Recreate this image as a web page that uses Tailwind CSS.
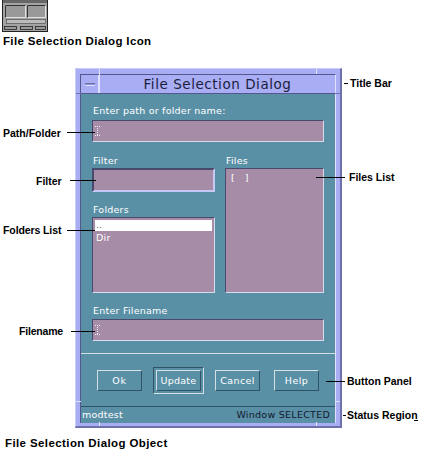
<!DOCTYPE html>
<html lang="en">
<head>
<meta charset="utf-8" />
<title>File Selection Dialog</title>
<script src="https://cdn.jsdelivr.net/npm/@tailwindcss/browser@4"></script>
</head>
<body class="bg-white">
<div class="relative w-[430px] h-[458px] overflow-hidden bg-white font-['Liberation_Sans',sans-serif] text-black">

  <!-- icon + caption -->
  <div class="h-[68px] pl-[2px]">
    <svg width="46" height="32" viewBox="0 0 46 32" class="block">
      <rect x="0" y="0" width="46" height="32" fill="#a3a3a3" />
      <rect x="0" y="0" width="46" height="3" fill="#666" />
      <rect x="0.5" y="-1" width="45" height="32.5" fill="none" stroke="#222" />
      <rect x="3.5" y="5.5" width="20" height="12" fill="#999" stroke="#e2e2e2" />
      <rect x="25.5" y="5.5" width="18" height="12" fill="#999" stroke="#e2e2e2" />
      <path d="M3.5 5.5H23.5M25.5 5.5H43.5M3.5 5.5V17.5M25.5 5.5V17.5" stroke="#333" fill="none" />
      <rect x="4.5" y="19.5" width="39" height="4" fill="#bbb" stroke="#444" stroke-width="0.6" />
      <rect x="2.5" y="26.5" width="12" height="3" fill="#999" stroke="#222" stroke-width="0.8" />
      <rect x="18.5" y="26.5" width="12" height="3" fill="#999" stroke="#222" stroke-width="0.8" />
      <rect x="33.5" y="26.5" width="10" height="3" fill="#999" stroke="#222" stroke-width="0.8" />
    </svg>
    <p class="mt-[1px] ml-[1px] text-[11.5px] leading-[16px] font-bold tracking-[0.35px]">File Selection Dialog Icon</p>
  </div>

  <!-- dialog -->
  <div class="ml-[75px] w-[267px] h-[360px] relative bg-[#a9adf3] border-r-2 border-b-2 border-[#6d70ab] border-t border-l border-t-[#c9ccfa] border-l-[#c9ccfa] pt-[5px] pl-[4px] pr-[4px] pb-[3px] font-['DejaVu_Sans',sans-serif]">
    <!-- frame corner notches -->
    <div class="absolute left-[23px] top-0 w-[1px] h-[24px] bg-[#dfe1fd]"></div>
    <div class="absolute right-[23px] top-0 w-[1px] h-[5px] bg-[#dfe1fd]"></div>
    <div class="absolute left-[23px] bottom-0 w-[1px] h-[4px] bg-[#dfe1fd]"></div>
    <div class="absolute right-[23px] bottom-0 w-[1px] h-[4px] bg-[#dfe1fd]"></div>
    <div class="absolute left-0 top-[24px] w-[5px] h-[1px] bg-[#6d70ab]"></div>
    <div class="absolute right-0 top-[24px] w-[5px] h-[1px] bg-[#6d70ab]"></div>
    <div class="absolute left-0 bottom-[24px] w-[5px] h-[1px] bg-[#dfe1fd]"></div>
    <div class="absolute right-0 bottom-[24px] w-[5px] h-[1px] bg-[#dfe1fd]"></div>

    <div class="h-full flex flex-col border-t border-l border-[#53568f] border-r border-r-[#dfe1fd]">
      <!-- title bar -->
      <div class="h-[19px] flex shrink-0 border-b border-[#53568f] bg-[#a9adf3]">
        <div class="w-[18px] flex items-center justify-center border-r border-[#dfe1fd]">
          <span class="block w-[10px] h-[3px] bg-[#8e92d6] border-t border-t-[#6d70ab] border-b border-b-[#dfe1fd]"></span>
        </div>
        <div class="flex-1 text-center text-[13.5px] leading-[19px] tracking-[0.55px] text-[#1c1d3c] pl-[1px]">File Selection Dialog</div>
      </div>

      <!-- body -->
      <div class="flex-1 flex flex-col bg-[#5a90a6] text-[9.5px] leading-[12px] text-white tracking-[0.23px]">
        <div class="h-[259px] shrink-0 pl-[11px] pr-[11px] pt-[11px]">
          <p class="h-[15px] pl-[1px]">Enter path or folder name:</p>
          <div class="h-[22px] w-[232px] bg-[#a68ca6] border border-[#4a4a6e] border-r-[#d6dcec] border-b-[#d6dcec] pl-[2px] pt-[5px]">
            <svg width="5" height="10" viewBox="0 0 5 10" fill="#f2eef6" class="block"><path d="M0 0h1v1H0zM2 0h1v1H2zM4 0h1v1H4zM2 2h1v1H2zM2 4h1v1H2zM2 6h1v1H2zM0 9h1v1H0zM2 8h1v1H2zM4 9h1v1H4zM2 9h1v1H2z" /></svg>
          </div>

          <div class="mt-[13px] flex gap-[10px]">
            <div class="w-[123px]">
              <p class="h-[13px] pl-[1px]">Filter</p>
              <div class="h-[24px] bg-[#a68ca6] border-2 border-[#c6c8f5] border-t-[#4a4a6e] border-l-[#4a4a6e]"></div>
              <p class="mt-[12px] h-[13px] pl-[1px]">Folders</p>
              <div class="h-[76px] bg-[#a68ca6] border border-[#4a4a6e] border-r-[#d6dcec] border-b-[#d6dcec] p-[2px] pb-0">
                <div class="h-[11px] bg-white text-[#5a5a70] pl-[1px] text-[9px] leading-[11px]">..</div>
                <div class="mt-[1px] pl-[1px]">Dir</div>
              </div>
            </div>
            <div class="w-[99px]">
              <p class="h-[13px] pl-[1px]">Files</p>
              <div class="h-[125px] bg-[#a68ca6] border border-[#4a4a6e] border-r-[#d6dcec] border-b-[#d6dcec] pl-[5px] pt-[3px]">[&nbsp;&nbsp;&nbsp;]</div>
            </div>
          </div>

          <p class="mt-[12px] h-[14px] pl-[1px]">Enter Filename</p>
          <div class="h-[22px] w-[232px] bg-[#a68ca6] border border-[#4a4a6e] border-r-[#d6dcec] border-b-[#d6dcec] pl-[2px] pt-[5px]">
            <svg width="5" height="10" viewBox="0 0 5 10" fill="#f2eef6" class="block"><path d="M0 0h1v1H0zM2 0h1v1H2zM4 0h1v1H4zM2 2h1v1H2zM2 4h1v1H2zM2 6h1v1H2zM0 9h1v1H0zM2 8h1v1H2zM4 9h1v1H4zM2 9h1v1H2z" /></svg>
          </div>
        </div>

        <!-- button panel -->
        <div class="h-[54px] shrink-0 border-t border-t-[#d2e0e6] border-b border-b-[#2f5468] flex items-center pl-[16px] pt-[1px]">
          <button class="w-[45px] h-[21px] border border-[#d2e0e6] border-r-[#2f5468] border-b-[#2f5468] tracking-[0.8px]">Ok</button>
          <div class="ml-[11px] w-[51px] h-[27px] border border-[#2f5468] border-r-[#d2e0e6] border-b-[#d2e0e6] flex items-center justify-center">
            <button class="w-[45px] h-[21px] border border-[#d2e0e6] border-r-[#2f5468] border-b-[#2f5468]">Update</button>
          </div>
          <button class="ml-[11px] w-[45px] h-[21px] border border-[#d2e0e6] border-r-[#2f5468] border-b-[#2f5468] tracking-[0.4px]">Cancel</button>
          <button class="ml-[14px] w-[45px] h-[21px] border border-[#d2e0e6] border-r-[#2f5468] border-b-[#2f5468] tracking-[0.4px]">Help</button>
        </div>

        <!-- status -->
        <div class="flex-1 flex items-center justify-between pl-[1px] pr-[5px]">
          <span>modtest</span>
          <span class="text-[#101a30] tracking-[0.27px]">Window SELECTED</span>
        </div>
      </div>
    </div>
  </div>

  <p class="ml-[5px] mt-[7px] text-[11.5px] leading-[16px] font-bold tracking-[0.4px]">File Selection Dialog Object</p>

  <!-- callouts -->
  <span class="absolute left-[3px] top-[126px] text-[10.5px] leading-[14px] font-bold">Path/Folder</span>
  <span class="absolute left-[67px] top-[132px] w-[28px] h-[1px] bg-black"></span>
  <span class="absolute left-[36px] top-[174px] text-[10.5px] leading-[14px] font-bold">Filter</span>
  <span class="absolute left-[70px] top-[180px] w-[26px] h-[1px] bg-black"></span>
  <span class="absolute left-[3px] top-[223px] text-[10.5px] leading-[14px] font-bold tracking-[-0.1px]">Folders List</span>
  <span class="absolute left-[67px] top-[230px] w-[28px] h-[1px] bg-black"></span>
  <span class="absolute left-[19px] top-[324px] text-[10.5px] leading-[14px] font-bold tracking-[-0.2px]">Filename</span>
  <span class="absolute left-[71px] top-[331px] w-[24px] h-[1px] bg-black"></span>
  <span class="absolute left-[350px] top-[76px] text-[10.5px] leading-[14px] font-bold">Title Bar</span>
  <span class="absolute left-[344px] top-[83px] w-[4px] h-[1px] bg-black"></span>
  <span class="absolute left-[349px] top-[170px] text-[10.5px] leading-[14px] font-bold">Files List</span>
  <span class="absolute left-[316px] top-[177px] w-[29px] h-[1px] bg-black"></span>
  <span class="absolute left-[347px] top-[374px] text-[10.5px] leading-[14px] font-bold">Button Panel</span>
  <span class="absolute left-[326px] top-[381px] w-[19px] h-[1px] bg-black"></span>
  <span class="absolute left-[347px] top-[408px] text-[10.5px] leading-[14px] font-bold">Status Region</span>
  <span class="absolute left-[343px] top-[415px] w-[3px] h-[1px] bg-black"></span>
  <span class="absolute left-[414px] top-[420px] w-[4px] h-[1px] bg-black"></span>
</div>
</body>
</html>
